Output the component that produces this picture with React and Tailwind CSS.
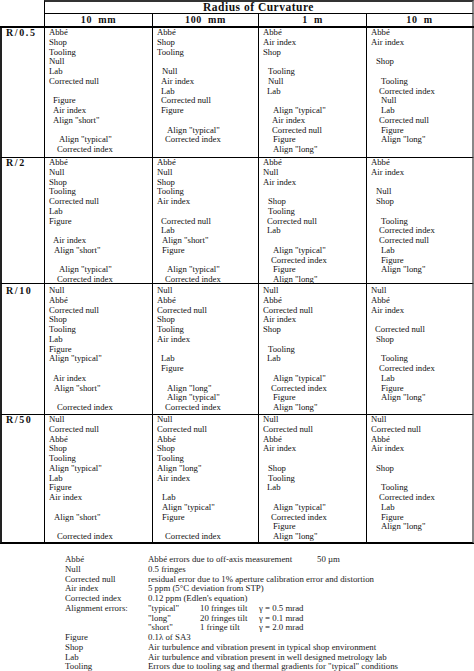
import React from 'react'

// indent classes used inside the cells (px offsets read off the scan)
const IND = {
  0: '',
  4: 'pl-[4px]',
  5: 'pl-[5px]',
  8: 'pl-[8px]',
  9: 'pl-[9px]',
  10: 'pl-[10px]',
}

const ROWS = [
  {
    label: 'R/0.5',
    h: 'h-[130px]',
    pt: 'pt-0',
    cells: [
      ['Abbé', 'Shop', 'Tooling', 'Null', 'Lab', 'Corrected null', '', '4|Figure', '4|Air index', '4|Align "short"', '', '10|Align "typical"', '8|Corrected index'],
      ['Abbé', 'Shop', 'Tooling', '', '5|Null', '4|Air index', '4|Lab', '4|Corrected null', '4|Figure', '', '10|Align "typical"', '8|Corrected index'],
      ['Abbé', 'Air index', 'Shop', '', '5|Tooling', '5|Null', '4|Lab', '', '10|Align "typical"', '9|Air index', '9|Corrected null', '10|Figure', '10|Align "long"'],
      ['Abbé', 'Air index', '', '5|Shop', '', '10|Tooling', '8|Corrected index', '10|Null', '10|Lab', '8|Corrected null', '10|Figure', '10|Align "long"'],
    ],
  },
  {
    label: 'R/2',
    h: 'h-[126px]',
    pt: 'pt-0',
    cells: [
      ['Abbé', 'Null', 'Shop', 'Tooling', 'Corrected null', 'Lab', 'Figure', '', '4|Air index', '5|Align "short"', '', '10|Align "typical"', '8|Corrected index'],
      ['Abbé', 'Null', 'Shop', 'Tooling', 'Air index', '', '4|Corrected null', '4|Lab', '5|Align "short"', '5|Figure', '', '10|Align "typical"', '8|Corrected index'],
      ['Abbé', 'Null', 'Air index', '', '5|Shop', '5|Tooling', '4|Corrected null', '4|Lab', '', '10|Align "typical"', '8|Corrected index', '10|Figure', '10|Align "long"'],
      ['Abbé', 'Air index', '', '5|Null', '5|Shop', '', '10|Tooling', '8|Corrected index', '8|Corrected null', '10|Lab', '10|Figure', '10|Align "long"'],
    ],
  },
  {
    label: 'R/10',
    h: 'h-[131px]',
    pt: 'pt-[2px]',
    cells: [
      ['Null', 'Abbé', 'Corrected null', 'Shop', 'Tooling', 'Lab', 'Figure', 'Align "typical"', '', '4|Air index', '5|Align "short"', '', '8|Corrected index'],
      ['Null', 'Abbé', 'Corrected null', 'Shop', 'Tooling', 'Air index', '', '4|Lab', '4|Figure', '', '10|Align "long"', '10|Align "typical"', '8|Corrected index'],
      ['Null', 'Abbé', 'Corrected null', 'Air index', 'Shop', '', '5|Tooling', '4|Lab', '', '10|Align "typical"', '8|Corrected index', '10|Figure', '10|Align "long"'],
      ['Null', 'Abbé', 'Air index', '', '4|Corrected null', '5|Shop', '', '10|Tooling', '8|Corrected index', '10|Lab', '10|Figure', '10|Align "long"'],
    ],
  },
  {
    label: 'R/50',
    h: 'h-[128px]',
    pt: 'pt-0',
    cells: [
      ['Null', 'Corrected null', 'Abbé', 'Shop', 'Tooling', 'Align "typical"', 'Lab', 'Figure', 'Air index', '', '5|Align "short"', '', '8|Corrected index'],
      ['Null', 'Corrected null', 'Abbé', 'Shop', 'Tooling', 'Align "long"', 'Air index', '', '5|Lab', '5|Align "typical"', '5|Figure', '', '8|Corrected index'],
      ['Null', 'Corrected null', 'Abbé', 'Air index', '', '5|Shop', '5|Tooling', '4|Lab', '', '10|Align "typical"', '8|Corrected index', '10|Figure', '10|Align "long"'],
      ['Null', 'Corrected null', 'Abbé', 'Air index', '', '5|Shop', '', '10|Tooling', '8|Corrected index', '10|Lab', '10|Figure', '10|Align "long"'],
    ],
  },
]

const HEADS = ['10\u00a0\u00a0mm', '100\u00a0\u00a0mm', '1\u00a0\u00a0m', '10\u00a0\u00a0m']

const LEGEND = [
  ['Abbé', 'Abbé errors due to off-axis measurement'],
  ['Null', '0.5 fringes'],
  ['Corrected null', 'residual error due to 1% aperture calibration error and distortion'],
  ['Air index', '5 ppm (5°C deviation from STP)'],
  ['Corrected index', "0.12 ppm (Edlen's equation)"],
]

const ALIGN = [
  ['Alignment errors:', '"typical"', '10 fringes tilt', 'γ = 0.5 mrad'],
  ['', '"long"', '20 fringes tilt', 'γ = 0.1 mrad'],
  ['', '"short"', '1 fringe tilt', 'γ = 2.0 mrad'],
]

const LEGEND2 = [
  ['Figure', '0.1λ of SA3'],
  ['Shop', 'Air turbulence and vibration present in typical shop environment'],
  ['Lab', 'Air turbulence and vibration present in well designed metrology lab'],
  ['Tooling', 'Errors due to tooling sag and thermal gradients for "typical" conditions'],
]

function Line({ s }) {
  if (!s) return <div className="h-[9.75px]" />
  const parts = s.includes('|') ? s.split('|') : ['0', s]
  return (
    <div className={`h-[9.75px] whitespace-nowrap ${IND[parts[0]]}`}>{parts[1]}</div>
  )
}

function Row({ row }) {
  return (
    <div className={`grid grid-cols-[42px_108px_106px_108px_108px] border-l-2 border-r-2 border-b border-l-[#222] border-r-[#888] border-b-black ${row.h}`}>
      <div className={`pl-[4px] font-bold text-[10px] leading-[9.75px] tracking-[1.6px] ${row.pt}`}>
        {row.label}
      </div>
      {row.cells.map((lines, i) => (
        <div key={i} className={`border-l border-black pl-[4px] ${row.pt}`}>
          {lines.map((s, j) => (
            <Line key={j} s={s} />
          ))}
        </div>
      ))}
    </div>
  )
}

export default function App() {
  return (
    <div className="w-[474px] h-[671px] overflow-hidden bg-white text-[#111] font-['Liberation_Serif',serif] text-[8.7px] leading-[9.75px]">
      {/* Title row */}
      <div className="flex h-[14px]">
        <div className="w-[44px]" />
        <div className="flex-1 border-t-2 border-l border-b border-r-2 border-t-[#333] border-l-black border-b-black border-r-[#888] text-center font-bold text-[11.5px] leading-[11px] tracking-[0.5px]">
          Radius of Curvature
        </div>
      </div>

      {/* Column heads */}
      <div className="grid grid-cols-[44px_108px_106px_108px_108px] h-[14px] border-b-2 border-black">
        <div />
        {HEADS.map((h, i) => (
          <div
            key={i}
            className={`border-l border-black text-center font-bold text-[10px] leading-[12px] tracking-[0.6px] ${i === 3 ? 'border-r-2 border-r-[#888]' : ''}`}
          >
            {h}
          </div>
        ))}
      </div>

      {ROWS.map((r, i) => (
        <Row key={i} row={r} />
      ))}
      <div className="h-px w-full bg-black" />

      {/* Legend */}
      <div className="mt-[11px] pl-[65px] text-[8.8px] text-[#222]">
        {LEGEND.map(([a, b], i) => (
          <div key={i} className="flex h-[9.75px] whitespace-nowrap">
            <div className="w-[83px]">{a}</div>
            <div className={i === 0 ? 'w-[169px]' : ''}>{b}</div>
            {i === 0 && <div>50 µm</div>}
          </div>
        ))}
        {ALIGN.map(([a, b, c, d], i) => (
          <div key={i} className="flex h-[9.75px] whitespace-nowrap">
            <div className="w-[83px]">{a}</div>
            <div className="w-[52px]">{b}</div>
            <div className="w-[59px]">{c}</div>
            <div>{d}</div>
          </div>
        ))}
        {LEGEND2.map(([a, b], i) => (
          <div key={i} className="flex h-[9.75px] whitespace-nowrap">
            <div className="w-[83px]">{a}</div>
            <div>{b}</div>
          </div>
        ))}
      </div>
    </div>
  )
}
